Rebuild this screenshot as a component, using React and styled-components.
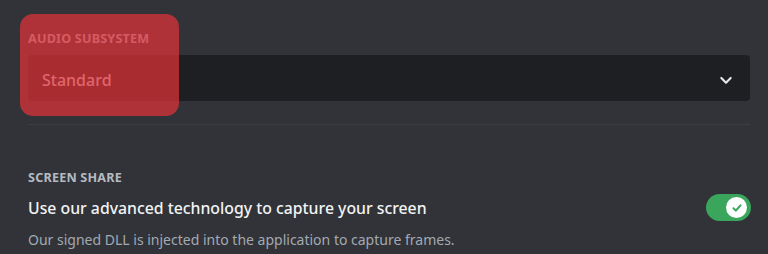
import React from "react";
import styled, { createGlobalStyle } from "styled-components";

const Global = createGlobalStyle`
  html, body { margin: 0; padding: 0; background: #313338; }
  body { font-family: "Noto Sans", "Open Sans", sans-serif; -webkit-font-smoothing: antialiased; }
`;

const Page = styled.div`
  position: relative;
  width: 768px;
  height: 254px;
  overflow: hidden;
  box-sizing: border-box;
  padding: 30px 18px 0 28px;
  background: #313338;
  display: flex;
  flex-direction: column;
`;

const Section = styled.section`
  display: flex;
  flex-direction: column;
`;

const Label = styled.h5`
  margin: 0;
  font-size: 12.6px;
  line-height: 18px;
  font-weight: 700;
  letter-spacing: 0.2px;
  text-transform: uppercase;
  color: #b5bac1;
`;

const Select = styled.div`
  margin-top: 7px;
  height: 46px;
  box-sizing: border-box;
  background: #1e1f22;
  border-radius: 4px;
  display: flex;
  align-items: center;
  justify-content: space-between;
  padding: 3px 16px 0 14px;
`;

const Value = styled.span`
  font-size: 16px;
  color: #dbdee1;
  font-weight: 500;
`;

const Divider = styled.div`
  margin-top: 23px;
  height: 1px;
  background: #3b3d43;
`;

const ShareSection = styled(Section)`
  margin-top: 44px;
`;

const Row = styled.div`
  margin-top: 7px;
  display: flex;
  align-items: center;
  justify-content: space-between;
`;

const Title = styled.div`
  font-size: 15.8px;
  font-weight: 500;
  line-height: 24px;
  color: #f2f3f5;
`;

const Desc = styled.div`
  margin-top: 9px;
  font-size: 14px;
  line-height: 20px;
  color: #a3a9b1;
`;

const Toggle = styled.div`
  width: 45px;
  height: 27px;
  border-radius: 14px;
  background: ${(p) => (p.on ? "#3aa65b" : "#80848e")};
  display: flex;
  align-items: center;
  justify-content: ${(p) => (p.on ? "flex-end" : "flex-start")};
  padding: 0 4px;
  box-sizing: border-box;
  margin-right: -1px;
`;

const Knob = styled.div`
  width: 21px;
  height: 21px;
  border-radius: 50%;
  background: #ffffff;
  display: flex;
  align-items: center;
  justify-content: center;
`;

const Highlight = styled.div`
  position: absolute;
  left: 20px;
  top: 14px;
  width: 159px;
  height: 102px;
  border-radius: 13px;
  background: rgba(228, 50, 56, 0.7);
  pointer-events: none;
`;

export default function App() {
  return (
    <>
      <Global />
      <Page>
        <Section>
          <Label>Audio Subsystem</Label>
          <Select>
            <Value>Standard</Value>
            <svg width="16" height="16" viewBox="0 0 24 24" fill="none">
              <path d="M5 9l7 7 7-7" stroke="#e6e8ea" strokeWidth="3.2" strokeLinecap="round" strokeLinejoin="round" />
            </svg>
          </Select>
        </Section>
        <Divider />
        <ShareSection>
          <Label>Screen Share</Label>
          <Row>
            <Title>Use our advanced technology to capture your screen</Title>
            <Toggle on>
              <Knob>
                <svg width="14" height="14" viewBox="0 0 24 24" fill="none">
                  <path d="M6 12.5l4 4 8-9" stroke="#3aa65b" strokeWidth="3.6" strokeLinecap="round" strokeLinejoin="round" />
                </svg>
              </Knob>
            </Toggle>
          </Row>
          <Desc>Our signed DLL is injected into the application to capture frames.</Desc>
        </ShareSection>
        <Highlight />
      </Page>
    </>
  );
}
